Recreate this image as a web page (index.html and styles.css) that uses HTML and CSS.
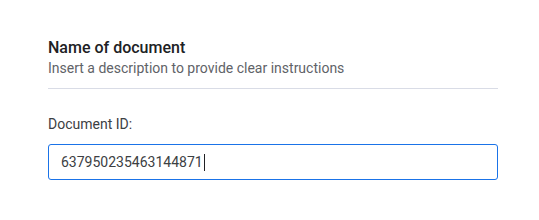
FILE: index.html
```html
<!DOCTYPE html>
<html lang="en">
<head>
  <meta charset="UTF-8" />
  <meta name="viewport" content="width=device-width, initial-scale=1.0" />
  <title>Document</title>
  <link rel="stylesheet" href="styles.css">
</head>
<body>
  <div class="form">
    <div class="header">
      <div class="title">Name of document</div>
      <div class="desc">Insert a description to provide clear instructions</div>
    </div>
    <div class="field">
      <label class="label">Document ID:</label>
      <div class="input">637950235463144871<span class="caret"></span></div>
    </div>
  </div>
</body>
</html>
```

FILE: styles.css
```css
body {
  margin: 0;
  font-family: Roboto, "Liberation Sans", Arial, sans-serif;
  background: #fff;
}
.form {
  width: 450px;
  padding: 38px 0 0 48px;
}
.header {
  padding-bottom: 10px;
  border-bottom: 1px solid #d9dce6;
}
.title {
  font-size: 16px;
  font-weight: 500;
  color: #202124;
  line-height: 20px;
}
.desc {
  font-size: 14px;
  color: #5f6368;
  line-height: 20px;
}
.field {
  margin-top: 26px;
}
.label {
  display: block;
  font-size: 14px;
  color: #3c4043;
  line-height: 18px;
  margin-bottom: 11px;
}
.input {
  height: 34px;
  border: 1px solid #1a73e8;
  border-radius: 3px;
  padding: 0 12px;
  font-size: 14px;
  line-height: 34px;
  color: #3c4043;
  display: flex;
  align-items: center;
}
.caret {
  display: inline-block;
  width: 1px;
  height: 17px;
  background: #202124;
  margin-left: 1px;
}
```
